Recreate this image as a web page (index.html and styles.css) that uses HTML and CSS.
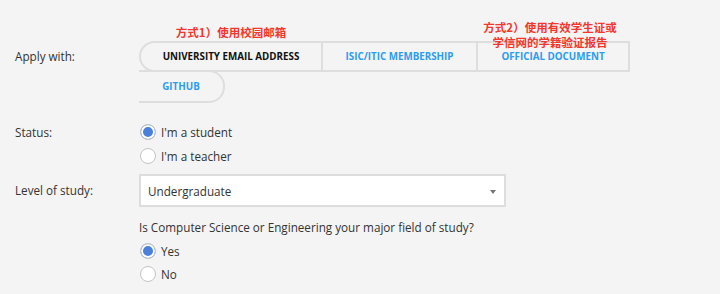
FILE: index.html
```html
<!DOCTYPE html>
<html lang="en">
<head>
    <meta charset="UTF-8">
    <title>Apply</title>
    <link rel="stylesheet" href="styles.css">
</head>
<body>
    <form class="apply-form">
        <div class="row row-apply">
            <div class="label">Apply with:</div>
            <div class="tabs">
                <div class="tab tab-first active">
                    University Email Address
                    <span class="note note-one">方式1）使用校园邮箱</span>
                </div>
                <div class="tab">ISIC/ITIC Membership</div>
                <div class="tab tab-last">
                    Official Document
                    <span class="note note-two">方式2）使用有效学生证或<br>学信网的学籍验证报告</span>
                </div>
                <div class="tab tab-wrap">GitHub</div>
            </div>
        </div>

        <div class="row row-status">
            <div class="label">Status:</div>
            <div class="options">
                <label class="option"><input type="radio" name="status" checked> I'm a student</label>
                <label class="option"><input type="radio" name="status"> I'm a teacher</label>
            </div>
        </div>

        <div class="row row-level">
            <div class="label">Level of study:</div>
            <div class="select">
                <span>Undergraduate</span>
                <span class="arrow"></span>
            </div>
        </div>

        <div class="row row-major">
            <div class="label"></div>
            <div class="options">
                <div class="question">Is Computer Science or Engineering your major field of study?</div>
                <label class="option"><input type="radio" name="major" checked> Yes</label>
                <label class="option"><input type="radio" name="major"> No</label>
            </div>
        </div>
    </form>
</body>
</html>
```

FILE: styles.css
```css
* {
    box-sizing: border-box;
}

body {
    margin: 0;
    background: #f4f4f4;
    font-family: "Open Sans", Arial, sans-serif;
    font-size: 11.7px;
    color: #333;
}

.apply-form {
    padding: 41px 0 0 15px;
}

.row {
    display: flex;
}

.label {
    width: 124px;
    flex-shrink: 0;
}

.row-apply .label {
    line-height: 31px;
}

/* tabs */
.tabs {
    display: flex;
    flex-wrap: wrap;
    width: 491px;
}

.tab {
    position: relative;
    height: 31px;
    line-height: 28px;
    text-align: center;
    font-size: 9.8px;
    font-weight: 700;
    text-transform: uppercase;
    color: #2b9cf2;
    border: 2px solid #dedede;
    border-left: none;
    width: 155px;
}

.tab.active {
    color: #111;
}

.tab-first {
    width: 184px;
    border-left: 2px solid #dedede;
    border-radius: 16px 0 0 16px;
}

.tab-last {
    width: 152px;
}

.tab-wrap {
    width: 86px;
    height: 33px;
    margin-top: -2px;
    line-height: 30px;
    border-radius: 0 16px 16px 0;
}

.note {
    position: absolute;
    left: 0;
    right: 0;
    font-family: "Noto Sans CJK SC", sans-serif;
    font-size: 11.5px;
    font-weight: 700;
    line-height: 14.5px;
    color: #f4362c;
    text-transform: none;
    white-space: nowrap;
}

.note-one {
    bottom: calc(100% + 4px);
}

.note-two {
    bottom: calc(100% - 6px);
    left: -6px;
}

/* radios */
.row-status {
    margin-top: 17px;
}

.options {
    display: flex;
    flex-direction: column;
}

.option {
    display: flex;
    align-items: center;
    height: 24px;
    padding-left: 1px;
}

.option input {
    appearance: none;
    -webkit-appearance: none;
    width: 16px;
    height: 16px;
    margin: 0 5px 0 0;
    border: 1px solid #c4c4c4;
    border-radius: 50%;
    background: #fff;
}

.option input:checked {
    background: #4a7fdb;
    box-shadow: inset 0 0 0 2px #fff;
}

.row-status .label {
    line-height: 24px;
}

/* select */
.row-level {
    margin-top: 6px;
}

.row-level .label {
    line-height: 33px;
}

.select {
    display: flex;
    justify-content: space-between;
    align-items: center;
    width: 367px;
    height: 33px;
    padding: 0 8px 0 7px;
    background: #fff;
    border: 2px solid #dddddd;
}

.arrow {
    width: 0;
    height: 0;
    margin-top: 3px;
    border-left: 3px solid transparent;
    border-right: 3px solid transparent;
    border-top: 4px solid #777;
}

/* major question */
.row-major {
    margin-top: 8px;
}

.question {
    line-height: 24px;
}

.row-major .option {
    height: 23px;
}
```
